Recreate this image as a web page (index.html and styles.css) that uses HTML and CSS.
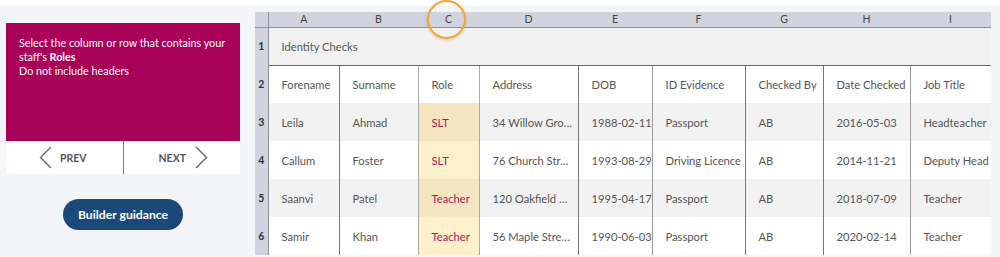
FILE: index.html
```html
<!DOCTYPE html>
<html>
<head>
<meta charset="utf-8">
<link rel="stylesheet" href="styles.css">
</head>
<body>
<div class="topstrip"></div>
<div class="main">
  <aside class="side">
    <div class="prompt">
      <p class="line">Select the column or row that contains your</p>
      <p class="line">staff's <b>Roles</b></p>
      <p class="line">Do not include headers</p>
    </div>
    <div class="nav">
      <button class="navbtn prev">
        <svg width="13" height="23" viewBox="0 0 13 23"><polyline points="12,1 1.5,11.5 12,22" fill="none" stroke="#666" stroke-width="1.4"/></svg>
        <span>PREV</span>
      </button>
      <button class="navbtn next">
        <span>NEXT</span>
        <svg width="13" height="23" viewBox="0 0 13 23"><polyline points="1,1 11.5,11.5 1,22" fill="none" stroke="#666" stroke-width="1.4"/></svg>
      </button>
    </div>
    <div class="guide-wrap"><button class="guide">Builder guidance</button></div>
  </aside>
  <section class="sheet">
    <table class="grid">
      <colgroup>
        <col class="w-rn"><col class="w-a"><col class="w-b"><col class="w-c"><col class="w-d"><col class="w-e"><col class="w-f"><col class="w-g"><col class="w-h"><col class="w-i">
      </colgroup>
      <thead>
        <tr class="letters">
          <th class="corner"></th><th>A</th><th>B</th><th class="colc">C</th><th>D</th><th>E</th><th>F</th><th>G</th><th>H</th><th>I</th>
        </tr>
      </thead>
      <tbody>
        <tr class="title">
          <th class="rn">1</th><td colspan="9">Identity Checks</td>
        </tr>
        <tr class="hdr">
          <th class="rn">2</th><td>Forename</td><td>Surname</td><td class="c">Role</td><td>Address</td><td>DOB</td><td class="lt">ID Evidence</td><td>Checked By</td><td>Date Checked</td><td class="lt">Job Title</td>
        </tr>
        <tr class="odd">
          <th class="rn">3</th><td>Leila</td><td>Ahmad</td><td class="c role">SLT</td><td>34 Willow Gro…</td><td>1988-02-11</td><td class="lt">Passport</td><td>AB</td><td>2016-05-03</td><td class="lt">Headteacher</td>
        </tr>
        <tr class="even">
          <th class="rn">4</th><td>Callum</td><td>Foster</td><td class="c role">SLT</td><td>76 Church Str…</td><td>1993-08-29</td><td class="lt">Driving Licence</td><td>AB</td><td>2014-11-21</td><td class="lt">Deputy Head</td>
        </tr>
        <tr class="odd">
          <th class="rn">5</th><td>Saanvi</td><td>Patel</td><td class="c role">Teacher</td><td>120 Oakfield …</td><td>1995-04-17</td><td class="lt">Passport</td><td>AB</td><td>2018-07-09</td><td class="lt">Teacher</td>
        </tr>
        <tr class="even">
          <th class="rn">6</th><td>Samir</td><td>Khan</td><td class="c role">Teacher</td><td>56 Maple Stre…</td><td>1990-06-03</td><td class="lt">Passport</td><td>AB</td><td>2020-02-14</td><td class="lt">Teacher</td>
        </tr>
      </tbody>
    </table>
    <div class="ring"></div>
  </section>
</div>
</body>
</html>
```

FILE: styles.css
```css
* { box-sizing: border-box; }
html, body { margin: 0; padding: 0; }
body {
  width: 1000px;
  height: 257px;
  overflow: hidden;
  background: #f4f5f9;
  font-family: "Lato", "Liberation Sans", sans-serif;
  color: #555;
}
.topstrip { height: 6px; background: #fff; }
.main { display: flex; align-items: flex-start; height: 251px; }
.side { width: 255px; flex: none; padding: 17px 15px 0 6px; }
.prompt {
  height: 118px;
  background: #a90058;
  color: #fff;
  padding: 13px 8px 13px 13px;
  font-size: 10.8px;
  line-height: 14px;
}
.prompt .line { margin: 0; white-space: nowrap; }
.prompt b { font-weight: 700; }
.nav { display: flex; height: 33px; background: #fff; }
.navbtn {
  flex: 1;
  display: flex;
  align-items: center;
  border: 0;
  background: transparent;
  font-family: inherit;
  font-size: 10.5px;
  font-weight: 700;
  color: #555;
  padding: 0;
  cursor: pointer;
}
.prev { padding-left: 33px; gap: 8px; border-right: 1px solid #cf4a8c; }
.next { justify-content: flex-end; padding-right: 32px; gap: 9px; }
.guide-wrap { display: flex; justify-content: center; padding-top: 25px; }
.guide {
  width: 120px;
  height: 31px;
  border: 0;
  border-radius: 16px;
  background: #1b4a7a;
  color: #fff;
  font-family: inherit;
  font-size: 12.2px;
  font-weight: 700;
}
.sheet { position: relative; padding-top: 6px; }
.grid {
  border-collapse: collapse;
  table-layout: fixed;
  width: 736px;
  font-size: 11.2px;
}
.w-rn { width: 13px; } .w-a { width: 71px; } .w-b { width: 79px; } .w-c { width: 61px; }
.w-d { width: 99px; } .w-e { width: 74px; } .w-f { width: 93px; } .w-g { width: 78px; }
.w-h { width: 87px; } .w-i { width: 81px; }
.letters th {
  height: 15px;
  padding: 0;
  background: #d1d4de;
  border-bottom: 1px solid #8e9099;
  font-weight: 400;
  font-size: 10.5px;
  color: #444;
  line-height: 14px;
}
.letters .corner { border-right: 1px solid #8e9099; }
.rn {
  background: #d1d4de;
  border-right: 1px solid #8e9099;
  font-size: 10.5px;
  font-weight: 700;
  color: #333;
  padding: 0;
  text-align: center;
}
tbody tr { height: 38px; }
td {
  padding: 0 0 0 13px;
  white-space: nowrap;
  overflow: hidden;
  vertical-align: middle;
  color: #555;
  border-left: 1px solid #777;
}
.title td { background: #f2f2f2; border-bottom: 1px solid #666; border-left: 0; }
.hdr td { background: #fff; }
.odd td { background: #f2f2f2; }
.even td { background: #fff; }
td.lt { border-left-color: #999; }
td.c { border-left-color: #aaa; }
td.c + td { border-left-color: #aaa; }
.odd td.c { background: #f5e5c1; }
.even td.c { background: #fff0cc; }
td.role { color: #b3155f; }
.ring {
  position: absolute;
  left: 172px;
  top: -6px;
  width: 39px;
  height: 39px;
  border: 2.5px solid #f2a532;
  border-radius: 50%;
  box-shadow: 0 1px 3px rgba(160, 110, 20, 0.35);
  pointer-events: none;
}
```
